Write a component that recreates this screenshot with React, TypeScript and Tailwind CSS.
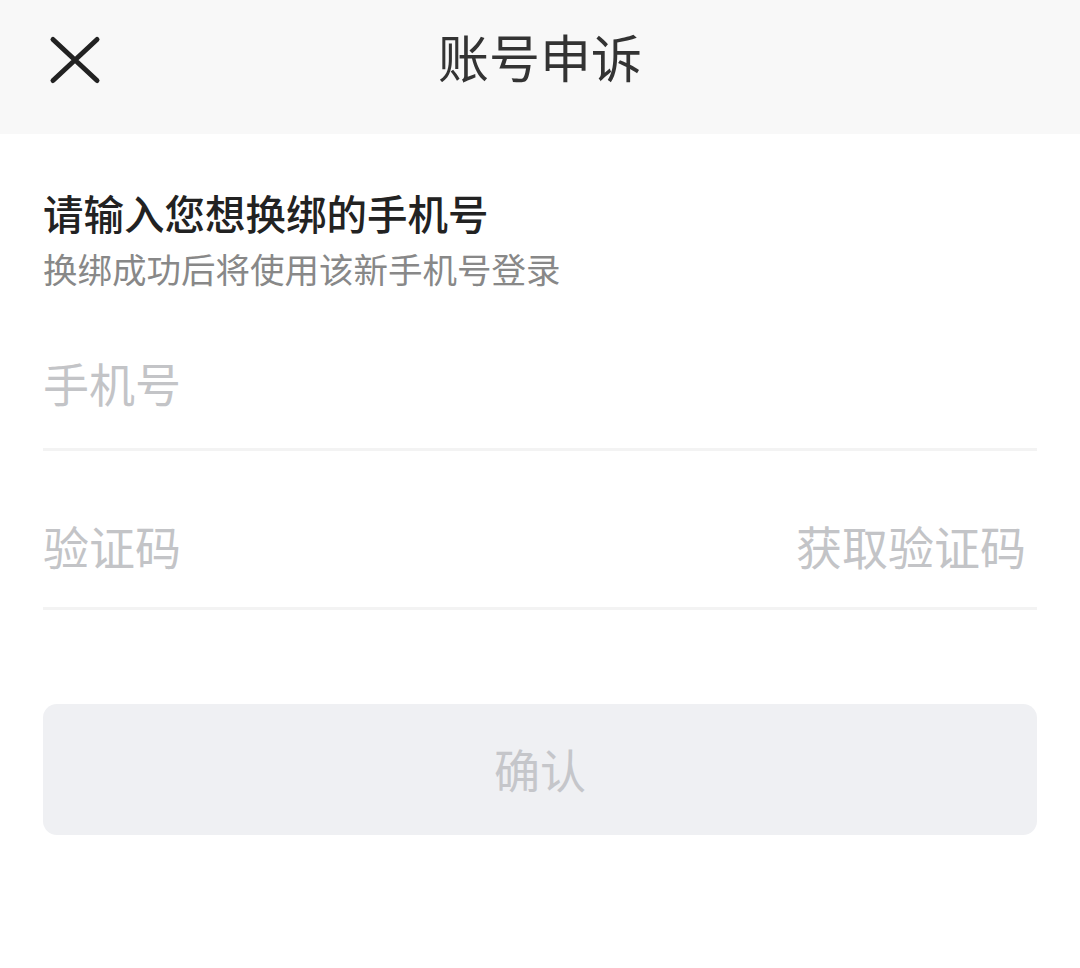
import React from "react";

const font = { fontFamily: '"Noto Sans CJK SC", "Noto Sans", sans-serif' };

export default function App() {
  return (
    <div className="w-[1080px] h-[968px] bg-white" style={font}>
      <div className="h-[134px] bg-[#f8f8f8] pt-[34px]">
        <div className="relative h-[52px] flex items-center justify-center">
          <svg
            className="absolute left-[48px] top-[1px]"
            width="54"
            height="50"
            viewBox="0 0 54 50"
          >
            <path
              d="M5 4.5 L49 45.5 M49 4.5 L5 45.5"
              stroke="#222"
              strokeWidth="5"
              strokeLinecap="round"
              fill="none"
            />
          </svg>
          <span className="mb-[7px] text-[51px] leading-[51px] text-[#333]">账号申诉</span>
        </div>
      </div>

      <div className="px-[43px]">
        <div className="pt-[59px] text-[40.5px] leading-[40px] font-medium text-[#222]">
          请输入您想换绑的手机号
        </div>
        <div className="mt-[18px] text-[34.5px] leading-[34px] text-[#888888]">
          换绑成功后将使用该新手机号登录
        </div>

        <div className="pt-[74px]">
          <div className="text-[46px] leading-[46px] text-[#c3c4c7]">手机号</div>
        </div>
        <div className="mt-[43px] h-[3px] bg-[#f3f3f3]" />

        <div className="mt-[71px] flex justify-between">
          <span className="text-[46px] leading-[46px] text-[#c3c4c7]">验证码</span>
          <span className="text-[46px] leading-[46px] text-[#c3c4c7] mr-[11px]">获取验证码</span>
        </div>
        <div className="mt-[39px] h-[3px] bg-[#f3f3f3]" />

        <div className="mt-[94px] h-[131px] rounded-[14px] bg-[#eff0f3] flex items-center justify-center">
          <span className="mb-[4px] text-[46px] leading-[46px] text-[#c5c6ca]">确认</span>
        </div>
      </div>
    </div>
  );
}
